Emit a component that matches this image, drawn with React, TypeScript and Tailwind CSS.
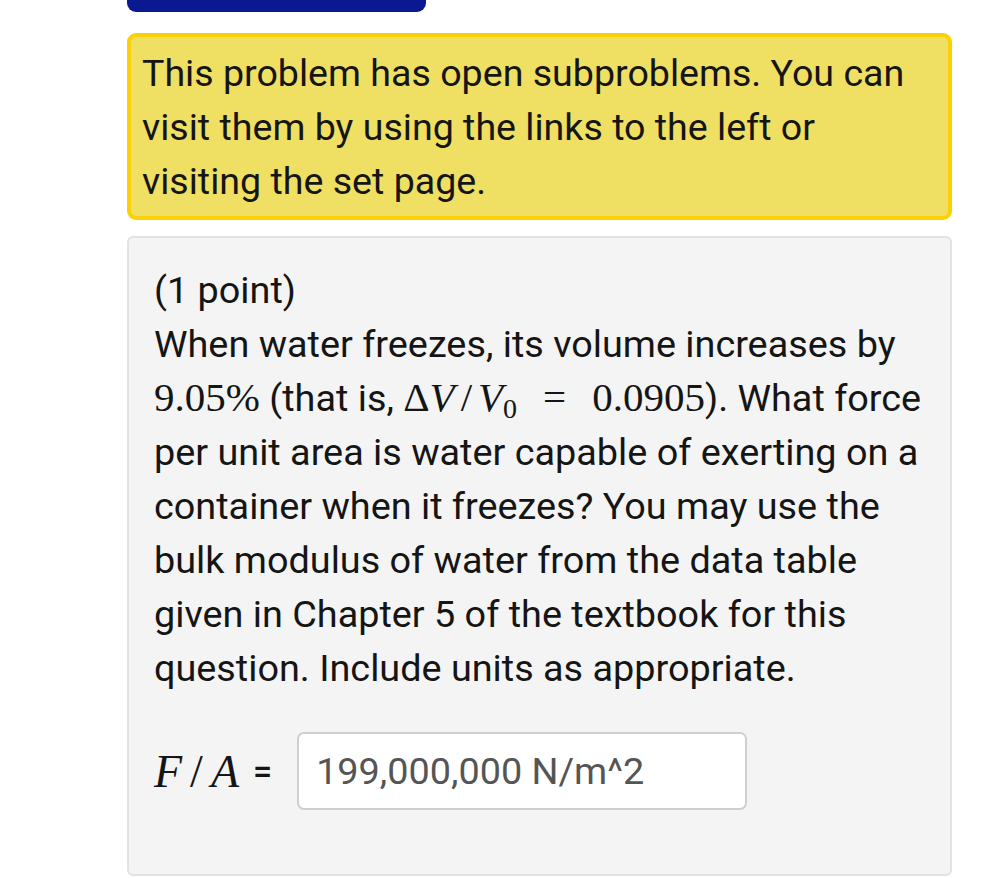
import React from "react";

const sans = { fontFamily: "Roboto, 'Noto Sans', sans-serif" };
const serif = { fontFamily: "'Liberation Serif', 'DejaVu Serif', serif" };

const M: React.FC<{ children: React.ReactNode; className?: string }> = ({ children, className }) => (
    <span className={className} style={serif}>
        {children}
    </span>
);

export default function App(): React.ReactElement {
    return (
        <div className="min-h-[878px] bg-white text-[#151515]" style={sans}>
            <div className="ml-[127px] w-[825px]">
                <div className="h-[12px] w-[299px] rounded-b-[9px] bg-[#0b1990]" />

                <div className="mt-[21px] rounded-[9px] border-4 border-[#fbd106] bg-[#efdf63] pl-[11px] pr-3 pt-[9px] pb-[8px] text-[37.6px] leading-[54px]">
                    This problem has open subproblems. You can
                    <br />
                    visit them by using the links to the left or
                    <br />
                    visiting the set page.
                </div>

                <div className="mt-[16px] flex h-[640px] flex-col rounded-[6px] border-2 border-[#e2e2e2] bg-[#f4f4f4] pl-[25px] pr-2 pt-[25px]">
                    <div className="whitespace-nowrap text-[37.8px] leading-[54px]">
                        <div>(1 point)</div>
                        <div>When water freezes, its volume increases by</div>
                        <div className="h-[54px]">
                            <M className="text-[41px] leading-none">9.05%</M> (that is,{" "}
                            <M className="text-[41px] leading-none">
                                Δ<span className="italic">V</span>
                                <span className="mx-[6px]">/</span>
                                <span className="italic">V</span>
                                <span className="relative top-[0.25em] text-[28px]">0</span>
                                <span className="mx-[26px]">=</span>0.0905
                            </M>
                            ). What force
                        </div>
                        <div>per unit area is water capable of exerting on a</div>
                        <div>container when it freezes? You may use the</div>
                        <div>bulk modulus of water from the data table</div>
                        <div>given in Chapter 5 of the textbook for this</div>
                        <div>question. Include units as appropriate.</div>
                    </div>

                    <div className="mt-[37px] flex items-center">
                        <span className="text-[46px] leading-none">
                            <M className="italic">F</M>
                            <M className="mx-[8px]">/</M>
                            <M className="italic">A</M>
                        </span>
                        <span className="ml-[14px] text-[34px] font-medium">=</span>
                        <div className="ml-[25px] flex h-[78px] w-[450px] items-center rounded-[7px] border-2 border-[#cfcfcf] bg-white pl-[17px] text-[37.8px] text-[#555]">
                            199,000,000 N/m^2
                        </div>
                    </div>
                </div>
            </div>
        </div>
    );
}
